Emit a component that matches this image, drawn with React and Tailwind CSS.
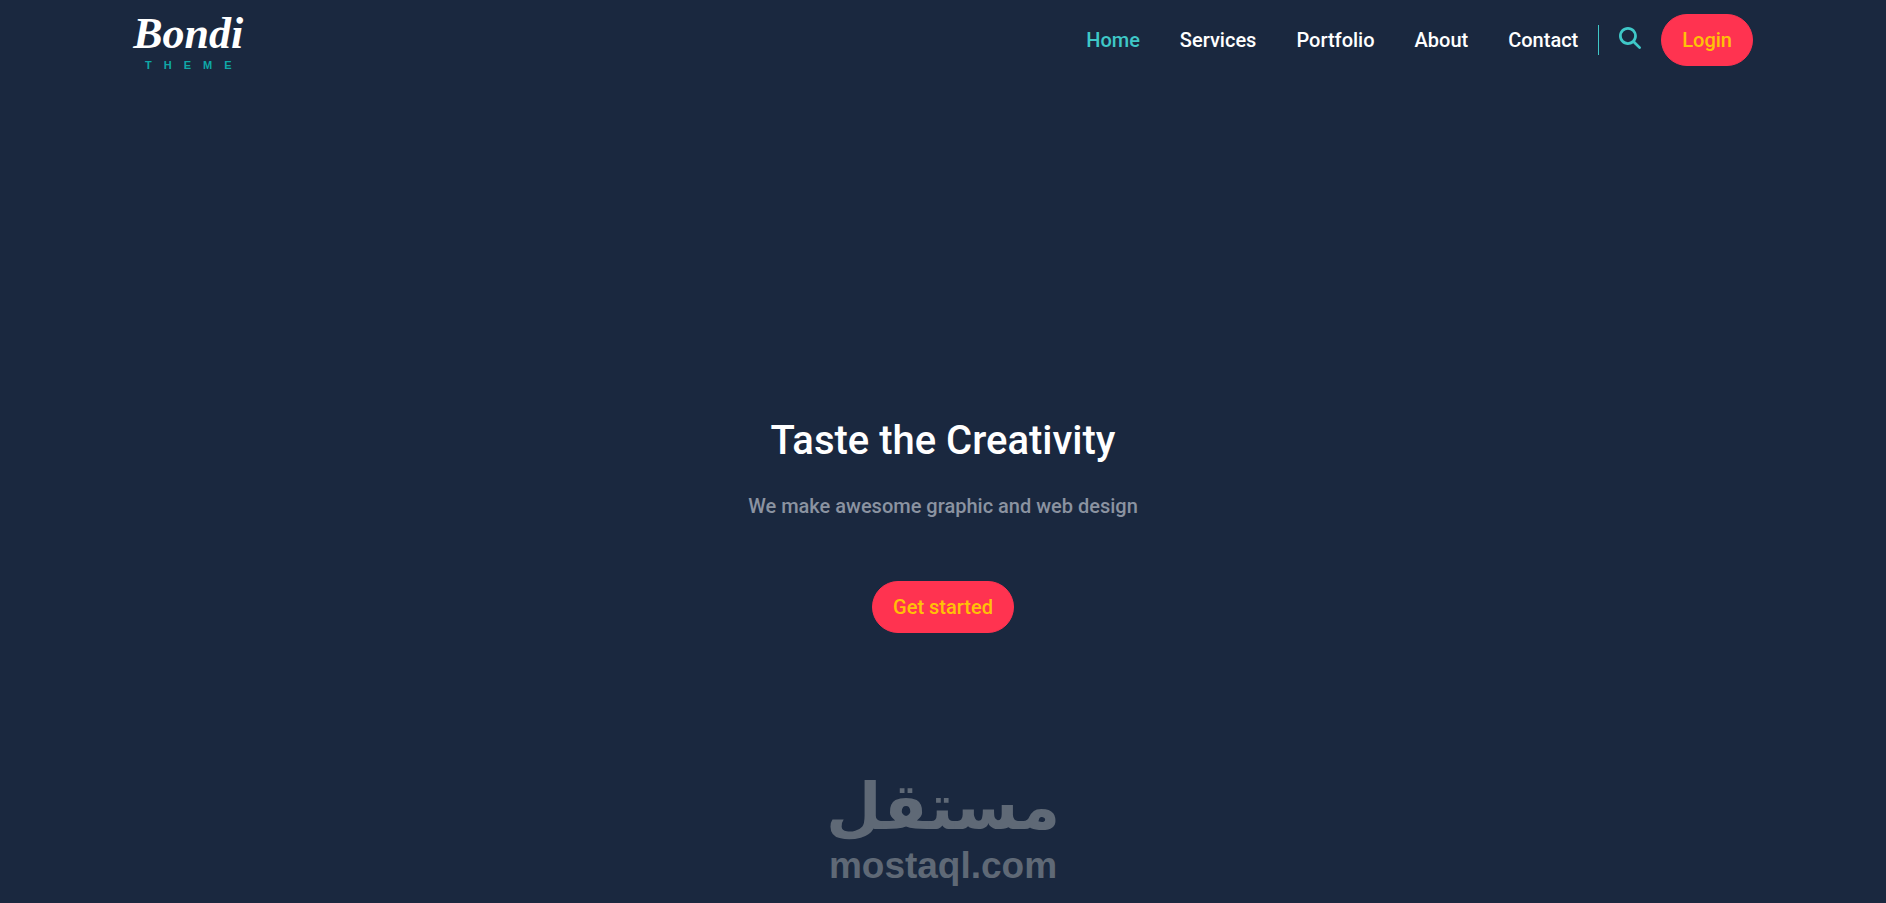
import { FaMagnifyingGlass } from 'react-icons/fa6'

const links = [
  { label: 'Home', href: '#home', active: true },
  { label: 'Services', href: '#services' },
  { label: 'Portfolio', href: '#portfolio' },
  { label: 'About', href: '#about' },
  { label: 'Contact', href: '#contact' },
]

function Logo() {
  return (
    <a href="#home" className="flex flex-col items-center text-white">
      <span className="font-['Liberation_Serif',cursive] text-[44px] leading-[50px] font-bold italic">Bondi</span>
      <span className="pl-3 font-['Liberation_Sans',sans-serif] text-[11px] leading-3 font-bold tracking-[12px] text-[#0fa8a8]">THEME</span>
    </a>
  )
}

function PillButton({ children }) {
  return (
    <button type="button" className="h-13 rounded-full border border-[#ff3350] bg-[#ff3350] px-5 text-xl font-medium text-[#ffc107] hover:bg-[#e62a46]">
      {children}
    </button>
  )
}

function Header() {
  return (
    <header className="mx-auto flex h-20 w-full max-w-[1660px] items-center justify-between px-5">
      <Logo />
      <div className="flex items-center gap-5">
        <nav className="flex items-center gap-10">
          {links.map(link => (
            <a
              key={link.label}
              href={link.href}
              className={link.active ? 'text-xl font-medium text-[#3fc8c8]' : 'text-xl font-medium text-white hover:text-[#3fc8c8]'}
            >
              {link.label}
            </a>
          ))}
        </nav>
        <div className="h-[30px] w-px bg-[#3fc8c8]" />
        <button type="button" aria-label="Search" className="pb-1 text-[#3fc8c8]">
          <FaMagnifyingGlass className="size-[22px]" />
        </button>
        <PillButton>Login</PillButton>
      </div>
    </header>
  )
}

function Hero() {
  return (
    <section className="flex flex-1 flex-col items-center justify-end text-center">
      <h1 className="text-[40px] leading-12 font-medium text-white">Taste the Creativity</h1>
      <p className="mt-[26px] text-xl leading-[30px] font-medium text-[#8b93a1]">We make awesome graphic and web design</p>
      <div className="mt-15">
        <PillButton>Get started</PillButton>
      </div>
    </section>
  )
}

function Watermark() {
  return (
    <div className="mt-34 flex flex-col items-center pb-4 text-[#5f6976]">
      <span lang="ar" dir="rtl" className="font-['DejaVu_Sans',sans-serif] text-[64px] leading-[76px] font-bold">مستقل</span>
      <span className="font-['Liberation_Sans',sans-serif] text-[37px] leading-[42px] font-bold">mostaql.com</span>
    </div>
  )
}

export default function App() {
  return (
    <div className="flex min-h-screen flex-col bg-[#1a283f] font-['Roboto',sans-serif]">
      <Header />
      <Hero />
      <Watermark />
    </div>
  )
}
